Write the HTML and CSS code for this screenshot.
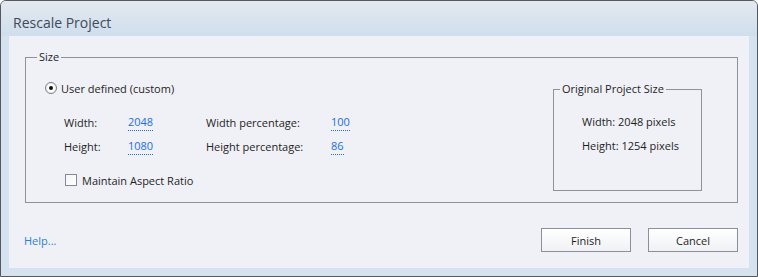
FILE: index.html
```html
<!DOCTYPE html>
<html lang="en">
<head>
<meta charset="utf-8">
<title>Rescale Project</title>
<link rel="stylesheet" href="styles.css">
</head>
<body>
<div class="window">
  <div class="titlebar">Rescale Project</div>
  <div class="content">
    <fieldset class="group group-size">
      <legend class="legend legend-size">Size</legend>
      <div class="size-body">
        <div class="left">
          <div class="radio-row">
            <span class="radio"><span class="radio-dot"></span></span>
            <span class="radio-label">User defined (custom)</span>
          </div>
          <div class="dims">
            <span class="lbl">Width:</span>
            <span class="val"><span class="num">2048</span></span>
            <span class="lbl">Width percentage:</span>
            <span class="val"><span class="num">100</span></span>
            <span class="lbl">Height:</span>
            <span class="val"><span class="num">1080</span></span>
            <span class="lbl">Height percentage:</span>
            <span class="val"><span class="num">86</span></span>
          </div>
          <div class="check-row">
            <span class="checkbox"></span>
            <span class="check-label">Maintain Aspect Ratio</span>
          </div>
        </div>
        <fieldset class="group group-orig">
          <legend class="legend legend-orig">Original Project Size</legend>
          <div class="orig-line">Width: 2048 pixels</div>
          <div class="orig-line">Height: 1254 pixels</div>
        </fieldset>
      </div>
    </fieldset>
    <div class="footer">
      <span class="help">Help...</span>
      <div class="buttons">
        <button class="btn">Finish</button>
        <button class="btn">Cancel</button>
      </div>
    </div>
  </div>
</div>
</body>
</html>
```
FILE: styles.css
```css
html, body {
  margin: 0;
  padding: 0;
}
body {
  width: 758px;
  height: 277px;
  overflow: hidden;
  background: #ffffff;
  font-family: "Open Sans", "Noto Sans", "DejaVu Sans", sans-serif;
  font-size: 11px;
  color: #1e1e1e;
}
.window {
  box-sizing: border-box;
  width: 758px;
  height: 277px;
  border: 1px solid #55585e;
  border-radius: 6px 6px 0 0;
  background: #d5e3f1;
  display: flex;
  flex-direction: column;
  padding: 0 8px 8px 8px;
}
.titlebar {
  box-sizing: border-box;
  height: 35px;
  margin: 0 -8px;
  padding: 12px 0 0 12px;
  line-height: 20px;
  font-size: 14px;
  color: #3d4b5a;
  background: linear-gradient(#e4e9ef, #cfdeed);
  border-radius: 5px 5px 0 0;
}
.content {
  flex: 1;
  background: #f0f1f6;
  display: flex;
  flex-direction: column;
  padding: 13px 11px 0 16px;
}
.group {
  margin: 0;
  padding: 0;
  border: 1px solid #8e929c;
  min-width: 0;
}
.legend {
  padding: 0 2px;
  line-height: 16px;
  white-space: nowrap;
}
.legend-size {
  margin-left: 11px;
}
.size-body {
  display: flex;
  align-items: flex-start;
}
.left {
  margin: 15px 0 14px 19px;
  display: flex;
  flex-direction: column;
}
.radio-row {
  display: flex;
  align-items: center;
  height: 16px;
  gap: 4px;
}
.radio {
  box-sizing: border-box;
  width: 12px;
  height: 12px;
  border-radius: 50%;
  border: 1px solid #7b7e86;
  background: radial-gradient(circle, #ffffff 40%, #e3e4e8 100%);
  display: flex;
  align-items: center;
  justify-content: center;
}
.radio-dot {
  width: 4px;
  height: 4px;
  border-radius: 50%;
  background: #111;
}
.dims {
  display: grid;
  grid-template-columns: 64px 78px 125px auto;
  grid-auto-rows: 24px;
  align-items: center;
  margin: 14px 0 0 19px;
}
.num {
  display: inline-block;
  color: #1b6ee3;
  line-height: 14px;
  padding-bottom: 1px;
  border-bottom: 1px dotted #1b6ee3;
}
.check-row {
  display: flex;
  align-items: center;
  height: 16px;
  gap: 5px;
  margin: 14px 0 0 20px;
}
.checkbox {
  box-sizing: border-box;
  width: 12px;
  height: 12px;
  border: 1px solid #868991;
  background: linear-gradient(135deg, #f4f4f6, #ffffff);
}
.group-orig {
  box-sizing: border-box;
  width: 149px;
  height: 110px;
  margin: 16px 35px 0 auto;
  padding: 13px 0 0 0;
}
.legend-orig {
  margin-left: 6px;
}
.orig-line {
  line-height: 24px;
  padding-left: 28px;
}
.footer {
  display: flex;
  align-items: center;
  justify-content: space-between;
  margin-top: 25px;
  height: 24px;
}
.help {
  color: #2f7fd2;
  margin-left: -1px;
}
.buttons {
  display: flex;
  gap: 17px;
}
.btn {
  box-sizing: border-box;
  width: 90px;
  height: 24px;
  border: 1px solid #8b8f9b;
  border-radius: 0;
  background: linear-gradient(#ffffff, #f0f1f4);
  font-family: inherit;
  font-size: 11px;
  color: #1e1e1e;
  padding: 0;
  margin: 0;
}
```
